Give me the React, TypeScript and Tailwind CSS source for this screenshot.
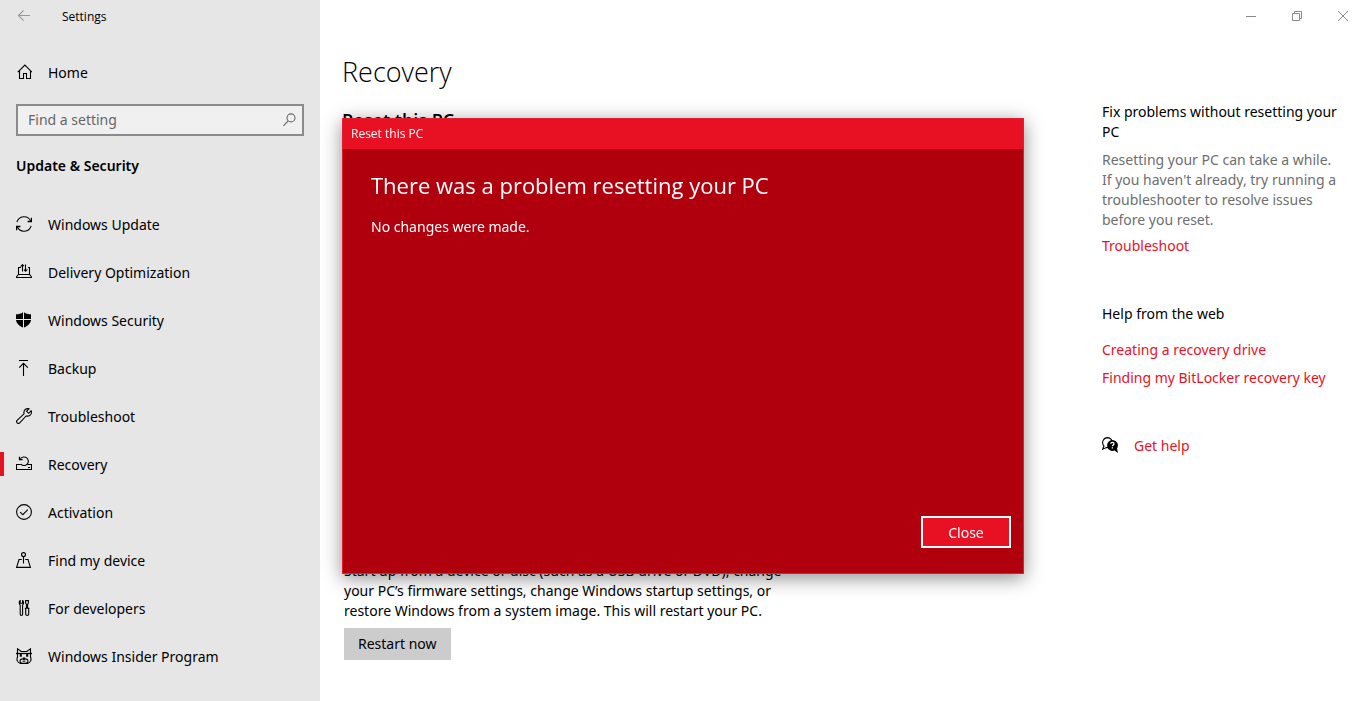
import type { ReactNode } from "react";

function Icon({ children, label }: { children: ReactNode; label?: string }) {
  return (
    <svg
      width="16"
      height="16"
      viewBox="0 0 16 16"
      fill="none"
      stroke="currentColor"
      strokeWidth="1.1"
      aria-hidden={label ? undefined : true}
      aria-label={label}
      className="shrink-0"
    >
      {children}
    </svg>
  );
}

const navItems: { label: string; icon: ReactNode; active?: boolean }[] = [
  {
    label: "Windows Update",
    icon: (
      <>
        <path d="M0.9 6.2A7.4 7.4 0 0 1 14.8 5.2" />
        <path d="M15.1 9.8A7.4 7.4 0 0 1 1.2 10.8" />
        <path d="M15.5 1.8V5.5H11.6" strokeWidth="1.3" />
        <path d="M0.5 14.2V10.5H4.4" strokeWidth="1.3" />
      </>
    ),
  },
  {
    label: "Delivery Optimization",
    icon: (
      <>
        <path d="M5 3.5H2.5V10.5H13.5V3.5H12" />
        <path d="M2.5 10.5L0.6 12.6V13.5H15.4V12.6L13.5 10.5" />
        <path d="M6.5 7.5V0.8M4.6 2.6L6.5 0.7L8 2.2M9.5 0.5V7.2M8 5.7L9.5 7.2L11.4 5.4" />
      </>
    ),
  },
  {
    label: "Windows Security",
    icon: (
      <path
        d="M7 0.2V7H0V2.2C3 2.2 5 1.6 7 0.2ZM8 0.2C10 1.6 12 2.2 15 2.2V7H8ZM0 8H7V15.6C3.5 14 0.4 11.5 0 8ZM8 8H15C14.6 11.5 11.5 14 8 15.6Z"
        fill="currentColor"
        stroke="none"
      />
    ),
  },
  {
    label: "Backup",
    icon: <path d="M3 0.5H12M7.5 16V3.5M3.2 7.6L7.5 3.3L11.8 7.6" />,
  },
  {
    label: "Troubleshoot",
    icon: (
      <path d="M13 0.8C10.5 0 7.8 1.7 7.9 4.6L8 5.9L1.1 12.3C-0.4 13.9 1.9 16.5 3.7 14.9L10.1 8L11.3 8.1C14.4 8.2 16.2 5.4 15.1 2.8L12.6 5.3L10.6 3.3Z" />
    ),
  },
  {
    label: "Recovery",
    active: true,
    icon: (
      <>
        <path d="M4.8 8.5H0.5V13.5H15.5V8.5H11.2M12 11.5H14" />
        <path d="M4.5 2.8A4.3 4.3 0 1 1 4.9 8.2" />
        <path d="M3.5 0.8V3.6H6.6" strokeWidth="1.3" />
      </>
    ),
  },
  {
    label: "Activation",
    icon: (
      <>
        <circle cx="8" cy="8" r="7.4" />
        <path d="M4.2 8.2L6.8 10.7L11.8 5.6" />
      </>
    ),
  },
  {
    label: "Find my device",
    icon: (
      <>
        <circle cx="7.5" cy="2.6" r="2" />
        <path d="M7.5 4.6V11.5M5.8 7.5H3L0.6 15.4H14.4L12 7.5H9.2" />
      </>
    ),
  },
  {
    label: "For developers",
    icon: (
      <>
        <path d="M4.2 0.6C2.8 1.4 2.9 4.2 4.2 5V14.2C4.2 15.8 6.6 15.8 6.6 14.2V5C7.9 4.2 8 1.4 6.6 0.6V3.2H4.2Z" />
        <path d="M9.6 0.6H12.4V3L11.6 4.3V8.2H12.7V14.2C12.7 15.8 9.7 15.8 9.7 14.2V8.2H10.5V4.3L9.6 3ZM8.8 8.2H13.4" />
      </>
    ),
  },
  {
    label: "Windows Insider Program",
    icon: (
      <>
        <path d="M1.5 5V0.8L5.2 3.5H10.8L14.5 0.8V5" />
        <path d="M0 5.5H16" strokeWidth="1.3" />
        <path d="M1.5 5.5V9C0.2 11.6 1.4 14.6 4.4 15.4H11.6C14.6 14.6 15.8 11.6 14.5 9V5.5" />
        <path d="M4.8 6V8.8M11.2 6V8.8" strokeWidth="2" />
        <path d="M6.6 10H9.4M8 10V11.8M8 11.8C6.8 10.4 4 11 4 12.8C4 14.2 4.8 15.1 5.8 15.4M8 11.8C9.2 10.4 12 11 12 12.8C12 14.2 11.2 15.1 10.2 15.4M6.6 13.2H9.4" />
      </>
    ),
  },
];

function Sidebar() {
  return (
    <aside className="flex w-80 shrink-0 flex-col bg-[#e6e6e6]">
      <header className="flex h-8 items-center pl-4">
        <button type="button" aria-label="Back" className="text-[#999999]">
          <Icon>
            <path d="M14 7.5H2.5M7.6 2.3L2.4 7.5L7.6 12.7" />
          </Icon>
        </button>
        <span className="pt-px pl-[30px] font-['Open_Sans',sans-serif] text-[12px]">Settings</span>
      </header>

      <a href="#home" className="mt-4 flex h-12 items-center gap-4 pl-4 text-[14px]">
        <Icon>
          <path d="M1.8 8.2L8.9 1.1L15.9 8.2M3.5 6.8V14.5H7.5V9.5H10.5V14.5H14.5V6.8" />
        </Icon>
        Home
      </a>

      <label className="mx-4 mt-2 flex h-8 items-center border-2 border-[#8a8a8a] bg-[#f0f0f0] pr-1 pl-2.5 text-[#666666]">
        <input
          type="text"
          aria-label="Find a setting"
          placeholder="Find a setting"
          className="h-7 min-w-0 flex-1 bg-transparent pb-px text-[14px] outline-none placeholder:text-[#666666]"
        />
        <Icon>
          <circle cx="9" cy="5.9" r="4" />
          <path d="M6.2 8.8L1.4 13.8" />
        </Icon>
      </label>

      <h2 className="mt-5 pl-4 text-[14px] leading-5 font-semibold">Update &amp; Security</h2>

      <nav className="mt-6 flex flex-col">
        {navItems.map((item) => (
          <a
            key={item.label}
            href="#section"
            aria-current={item.active ? "page" : undefined}
            className="flex h-12 items-center text-[14px]"
          >
            <span className={item.active ? "h-6 w-1 bg-[#e81123]" : "h-6 w-1"} />
            <span className="flex items-center gap-4 pl-3">
              <Icon>{item.icon}</Icon>
              {item.label}
            </span>
          </a>
        ))}
      </nav>
    </aside>
  );
}

function WindowControls() {
  return (
    <div className="flex h-8 justify-end text-[#8a8a8a]">
      <button type="button" aria-label="Minimize" className="grid w-[46px] place-items-center">
        <Icon>
          <path d="M3 8.5H13" strokeWidth="1" />
        </Icon>
      </button>
      <button type="button" aria-label="Restore" className="grid w-[46px] place-items-center">
        <Icon>
          <path d="M3.5 5.5H10.5V12.5H3.5ZM5.5 5.5V3.5H12.5V10.5H10.5" strokeWidth="1" />
        </Icon>
      </button>
      <button type="button" aria-label="Close window" className="grid w-[46px] place-items-center">
        <Icon>
          <path d="M3 3L13 13M13 3L3 13" strokeWidth="1" />
        </Icon>
      </button>
    </div>
  );
}

function HelpPanel() {
  return (
    <aside className="w-[264px] shrink-0 pt-[70px] pr-6 text-[14px] leading-5">
      <h3>Fix problems without resetting your PC</h3>
      <p className="mt-2 text-[#6e6e6e]">
        Resetting your PC can take a while. If you haven't already, try running a troubleshooter to
        resolve issues before you reset.
      </p>
      <a href="#troubleshoot" className="mt-1.5 block text-[#e81123]">
        Troubleshoot
      </a>
      <h3 className="mt-12">Help from the web</h3>
      <a href="#drive" className="mt-4 block text-[#e81123]">
        Creating a recovery drive
      </a>
      <a href="#bitlocker" className="mt-2 block whitespace-nowrap text-[#e81123]">
        Finding my BitLocker recovery key
      </a>
      <a href="#help" className="mt-12 flex items-center gap-4 text-[#e81123]">
        <span className="pb-0.5 text-black">
          <Icon>
            <path d="M5.6 0.6A5 5 0 0 0 2 9L0.6 12.2L4.4 10.5A5 5 0 1 0 5.6 0.6Z" />
            <path
              d="M10.4 2.9A5.5 5.5 0 0 1 15 11.4L16 15.9L12.4 13.6A5.5 5.5 0 1 1 10.4 2.9Z"
              fill="currentColor"
              stroke="none"
            />
            <path
              d="M8.7 6.8C8.8 4.8 12 4.8 12 6.8C12 8 10.4 7.9 10.4 9.2M10.4 10.2V11.6"
              stroke="white"
              strokeWidth="1.3"
            />
          </Icon>
        </span>
        Get help
      </a>
    </aside>
  );
}

function ResetDialog() {
  return (
    <div className="fixed inset-0 flex items-start justify-center pt-[118px]">
      <section
        role="dialog"
        aria-modal="true"
        aria-labelledby="dialog-title"
        className="flex min-h-[456px] w-[682px] flex-col border border-[#e0202f] bg-[#b0000d] text-white shadow-[0_4px_18px_rgba(0,0,0,0.45)]"
      >
        <header
          id="dialog-title"
          className="flex h-[30px] items-center bg-[#e81123] pl-2 font-['Open_Sans',sans-serif] text-[12px]"
        >
          Reset this PC
        </header>
        <div className="flex-1 px-7 pt-5">
          <h2 className="font-['Open_Sans',sans-serif] text-[22px] leading-8">
            There was a problem resetting your PC
          </h2>
          <p className="mt-4 text-[14px] leading-5">No changes were made.</p>
        </div>
        <footer className="flex justify-end pr-3 pb-[25px]">
          <button type="button" className="h-8 w-[90px] border-2 border-white bg-[#e81123] text-[14px]">
            Close
          </button>
        </footer>
      </section>
    </div>
  );
}

export default function App() {
  return (
    <div className="flex min-h-screen bg-white font-['Noto_Sans',sans-serif] text-black">
      <Sidebar />
      <div className="flex min-w-0 flex-1 flex-col">
        <WindowControls />
        <div className="flex flex-1 justify-between">
          <main className="w-[480px] pl-6 text-[14px] leading-5">
            <h1 className="mt-5 -ml-0.5 font-['Open_Sans',sans-serif] text-[27px] leading-10 font-light">
              Recovery
            </h1>
            <h2 className="mt-[14px] -ml-0.5 font-['Open_Sans',sans-serif] text-[18px] leading-7 font-semibold">
              Reset this PC
            </h2>
            <p className="mt-[427px]">
              Start up from a device or disc (such as a USB drive or DVD), change your PC’s firmware
              settings, change Windows startup settings, or restore Windows from a system image. This
              will restart your PC.
            </p>
            <button type="button" className="mt-[7px] h-8 bg-[#cccccc] px-3.5">
              Restart now
            </button>
          </main>
          <HelpPanel />
        </div>
      </div>
      <ResetDialog />
    </div>
  );
}
